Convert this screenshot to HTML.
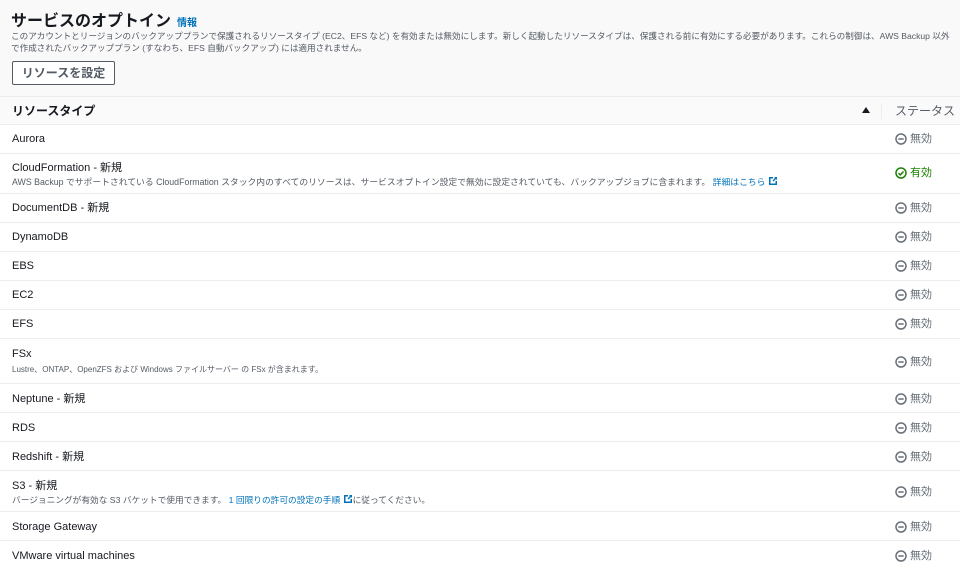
<!DOCTYPE html>
<html><head><meta charset="utf-8"><style>
*{margin:0;padding:0;box-sizing:border-box}
body{width:960px;height:569px;overflow:hidden;background:#fff;font-family:"Liberation Sans","Noto Sans CJK JP",sans-serif;color:#16191f;position:relative;line-height:1}
.top{position:absolute;left:0;top:0;width:960px;height:96px;background:#f9f9f9}
.t{position:absolute;white-space:nowrap;line-height:1}
h1{position:absolute;left:11px;top:12px;font-size:16px;line-height:16px;font-weight:bold;white-space:nowrap}
.info{font-size:10px;color:#0073bb;font-weight:bold;margin-left:6px}
.desc{font-size:8.6px;color:#545b64;left:11px}
.btn{position:absolute;left:12px;top:61px;width:103px;height:24px;border:1px solid #545b64;border-radius:2px;background:#fff;font-size:12px;font-weight:bold;color:#545b64;text-align:center;line-height:22px}
.hdr{position:absolute;left:0;top:96px;width:960px;height:29px;background:#fafafa;border-top:1px solid #eaeded;border-bottom:1px solid #eaeded}
.row{position:absolute;left:0;width:960px;border-bottom:1px solid #eaeded}
.name{position:absolute;left:12px;font-size:11px;line-height:12px;white-space:nowrap}
.sub{position:absolute;left:12px;font-size:8.5px;line-height:10px;color:#545b64;white-space:nowrap}
.st{position:absolute;left:895px;font-size:11px;line-height:12px;color:#687078;white-space:nowrap;display:flex;align-items:center;gap:3px}
.ok{color:#1d8102}
a{color:#0073bb;text-decoration:none}
.ext{display:inline-block;width:10px;height:10px;vertical-align:-1px}
</style></head><body>
<div class="top"></div>
<h1 style="top:14px">サービスのオプトイン<span class="info">情報</span></h1>
<div class="t desc" style="top:32px">このアカウントとリージョンのバックアッププランで保護されるリソースタイプ (EC2、EFS など) を有効または無効にします。新しく起動したリソースタイプは、保護される前に有効にする必要があります。これらの制御は、AWS Backup 以外</div>
<div class="t desc" style="top:44px">で作成されたバックアッププラン (すなわち、EFS 自動バックアップ) には適用されません。</div>
<div class="btn">リソースを設定</div>
<div class="hdr">
<div class="t" style="left:12px;top:8px;font-size:12px;font-weight:bold">リソースタイプ</div>
<div class="t" style="left:862px;top:10px;width:0;height:0;border-left:4px solid transparent;border-right:4px solid transparent;border-bottom:6px solid #16191f"></div>
<div class="t" style="left:881px;top:6px;width:1px;height:16px;background:#eaeded"></div>
<div class="t" style="left:895px;top:8px;font-size:12px;color:#545b64">ステータス</div>
</div>
<svg width="0" height="0" style="position:absolute"><defs>
<symbol id="m" viewBox="0 0 12 12"><circle cx="6" cy="6" r="5" fill="none" stroke="#687078" stroke-width="1.5"/><path d="M3.3 6h5.4" stroke="#687078" stroke-width="1.5"/></symbol>
<symbol id="c" viewBox="0 0 12 12"><circle cx="6" cy="6" r="5" fill="none" stroke="#1d8102" stroke-width="1.5"/><path d="M3.5 6.2l1.8 1.7 3.2-3.4" fill="none" stroke="#1d8102" stroke-width="1.5"/></symbol>
<symbol id="e" viewBox="0 0 10 10"><path d="M1 1h4v1.5H2.5v5h5V5H9v4H1z" fill="#0073bb"/><path d="M6 1h3v3L8 3 5.5 5.5 4.5 4.5 7 2z" fill="#0073bb"/></symbol>
</defs></svg>

<div class="row" style="top:125px;height:29px"><div class="name" style="top:8px">Aurora</div><div class="st" style="top:8px"><svg width="12" height="12"><use href="#m"/></svg>無効</div></div>
<div class="row" style="top:154px;height:40px"><div class="name" style="top:8px">CloudFormation - 新規</div><div class="sub" style="top:22px;font-size:8.8px">AWS Backup でサポートされている CloudFormation スタック内のすべてのリソースは、サービスオプトイン設定で無効に設定されていても、バックアップジョブに含まれます。 <a>詳細はこちら <svg class="ext"><use href="#e"/></svg></a></div><div class="st ok" style="top:13px"><svg width="12" height="12"><use href="#c"/></svg>有効</div></div>
<div class="row" style="top:194px;height:29px"><div class="name" style="top:8px">DocumentDB - 新規</div><div class="st" style="top:8px"><svg width="12" height="12"><use href="#m"/></svg>無効</div></div>
<div class="row" style="top:223px;height:29px"><div class="name" style="top:8px">DynamoDB</div><div class="st" style="top:8px"><svg width="12" height="12"><use href="#m"/></svg>無効</div></div>
<div class="row" style="top:252px;height:29px"><div class="name" style="top:8px">EBS</div><div class="st" style="top:8px"><svg width="12" height="12"><use href="#m"/></svg>無効</div></div>
<div class="row" style="top:281px;height:29px"><div class="name" style="top:8px">EC2</div><div class="st" style="top:8px"><svg width="12" height="12"><use href="#m"/></svg>無効</div></div>
<div class="row" style="top:310px;height:29px"><div class="name" style="top:8px">EFS</div><div class="st" style="top:8px"><svg width="12" height="12"><use href="#m"/></svg>無効</div></div>
<div class="row" style="top:339px;height:45px"><div class="name" style="top:9px">FSx</div><div class="sub" style="top:26px;font-size:8px">Lustre、ONTAP、OpenZFS および Windows ファイルサーバー の FSx が含まれます。</div><div class="st" style="top:17px"><svg width="12" height="12"><use href="#m"/></svg>無効</div></div>
<div class="row" style="top:384px;height:29px"><div class="name" style="top:9px">Neptune - 新規</div><div class="st" style="top:9px"><svg width="12" height="12"><use href="#m"/></svg>無効</div></div>
<div class="row" style="top:413px;height:29px"><div class="name" style="top:9px">RDS</div><div class="st" style="top:9px"><svg width="12" height="12"><use href="#m"/></svg>無効</div></div>
<div class="row" style="top:442px;height:29px"><div class="name" style="top:9px">Redshift - 新規</div><div class="st" style="top:9px"><svg width="12" height="12"><use href="#m"/></svg>無効</div></div>
<div class="row" style="top:471px;height:41px"><div class="name" style="top:9px">S3 - 新規</div><div class="sub" style="top:23px;font-size:8.7px">バージョニングが有効な S3 バケットで使用できます。 <a>1 回限りの許可の設定の手順 <svg class="ext"><use href="#e"/></svg></a>に従ってください。</div><div class="st" style="top:15px"><svg width="12" height="12"><use href="#m"/></svg>無効</div></div>
<div class="row" style="top:512px;height:29px"><div class="name" style="top:9px">Storage Gateway</div><div class="st" style="top:9px"><svg width="12" height="12"><use href="#m"/></svg>無効</div></div>
<div class="row" style="top:541px;height:29px;border:0"><div class="name" style="top:9px">VMware virtual machines</div><div class="st" style="top:9px"><svg width="12" height="12"><use href="#m"/></svg>無効</div></div>
</body></html>
